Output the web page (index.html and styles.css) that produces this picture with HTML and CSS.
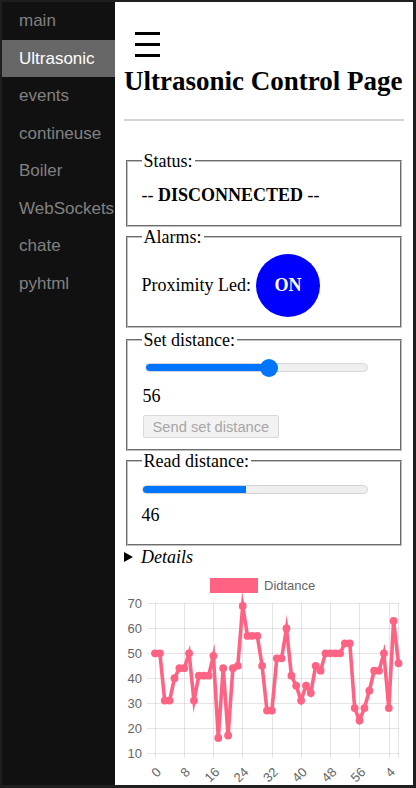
FILE: index.html
```html
<!DOCTYPE html>
<html>
<head>
<meta charset="utf-8">
<title>Ultrasonic Control Page</title>
<link rel="stylesheet" href="styles.css">
</head>
<body>
<div class="frame">
  <nav class="sidenav">
    <a class="nav-link" href="#">main</a>
    <a class="nav-link active" href="#">Ultrasonic</a>
    <a class="nav-link" href="#">events</a>
    <a class="nav-link" href="#">contineuse</a>
    <a class="nav-link" href="#">Boiler</a>
    <a class="nav-link" href="#">WebSockets</a>
    <a class="nav-link" href="#">chate</a>
    <a class="nav-link" href="#">pyhtml</a>
  </nav>
  <main class="main">
    <div class="menu-btn"><span></span><span></span><span></span></div>
    <h1 class="title">Ultrasonic Control Page</h1>
    <hr class="rule">

    <fieldset class="box box-status">
      <legend class="box-legend">Status:</legend>
      <div class="status-text">-- <strong>DISCONNECTED</strong> --</div>
    </fieldset>

    <fieldset class="box box-alarms">
      <legend class="box-legend">Alarms:</legend>
      <div class="alarm-row">
        <span>Proximity Led:</span>
        <button class="led" type="button">ON</button>
      </div>
    </fieldset>

    <fieldset class="box box-set">
      <legend class="box-legend">Set distance:</legend>
      <input class="slider" type="range" min="0" max="100" value="56" style="--fill:55.3%">
      <div class="value set-value">56</div>
      <button class="send-btn" type="button" disabled>Send set distance</button>
    </fieldset>

    <fieldset class="box box-read">
      <legend class="box-legend">Read distance:</legend>
      <progress class="meter" max="100" value="46"></progress>
      <div class="value read-value">46</div>
    </fieldset>

    <details class="details">
      <summary class="summary"><span class="tri"></span><em>Details</em></summary>
    </details>

    <svg class="chart" width="280" height="221" viewBox="0 0 280 221" xmlns="http://www.w3.org/2000/svg">
      <defs>
        <marker id="dot" markerUnits="userSpaceOnUse" markerWidth="10" markerHeight="10" refX="5" refY="5" viewBox="0 0 10 10">
          <circle cx="5" cy="5" r="3.9" fill="rgb(255,99,132)"/>
        </marker>
      </defs>
      <rect x="86" y="11" width="48" height="15" fill="rgb(255,99,132)"/>
      <text class="chart-text" x="140" y="23">Didtance</text>

      <g stroke="rgba(0,0,0,0.1)" stroke-width="1">
        <line x1="23" y1="36.5" x2="275" y2="36.5"/>
        <line x1="23" y1="61.5" x2="275" y2="61.5"/>
        <line x1="23" y1="86.5" x2="275" y2="86.5"/>
        <line x1="23" y1="111.5" x2="275" y2="111.5"/>
        <line x1="23" y1="136.5" x2="275" y2="136.5"/>
        <line x1="23" y1="161.5" x2="275" y2="161.5"/>
        <line x1="23" y1="186.5" x2="275" y2="186.5"/>
        <line x1="31.5" y1="36" x2="31.5" y2="191"/>
        <line x1="60.5" y1="36" x2="60.5" y2="191"/>
        <line x1="89.5" y1="36" x2="89.5" y2="191"/>
        <line x1="118.5" y1="36" x2="118.5" y2="191"/>
        <line x1="148.5" y1="36" x2="148.5" y2="191"/>
        <line x1="177.5" y1="36" x2="177.5" y2="191"/>
        <line x1="206.5" y1="36" x2="206.5" y2="191"/>
        <line x1="235.5" y1="36" x2="235.5" y2="191"/>
        <line x1="265.5" y1="36" x2="265.5" y2="191"/>
        <line x1="274.5" y1="36" x2="274.5" y2="191"/>
      </g>

      <g class="chart-text" text-anchor="end">
        <text x="18" y="41">70</text>
        <text x="18" y="66">60</text>
        <text x="18" y="91">50</text>
        <text x="18" y="116">40</text>
        <text x="18" y="141">30</text>
        <text x="18" y="166">20</text>
        <text x="18" y="191">10</text>
      </g>

      <g class="chart-text" text-anchor="end">
        <text x="35" y="207" transform="rotate(-45 35 203)">0</text>
        <text x="64" y="207" transform="rotate(-45 64 203)">8</text>
        <text x="93.5" y="207" transform="rotate(-45 93.5 203)">16</text>
        <text x="122.5" y="207" transform="rotate(-45 122.5 203)">24</text>
        <text x="152" y="207" transform="rotate(-45 152 203)">32</text>
        <text x="181" y="207" transform="rotate(-45 181 203)">40</text>
        <text x="210.5" y="207" transform="rotate(-45 210.5 203)">48</text>
        <text x="239.5" y="207" transform="rotate(-45 239.5 203)">56</text>
        <text x="269" y="207" transform="rotate(-45 269 203)">4</text>
      </g>

      <polyline fill="none" stroke="rgb(255,99,132)" stroke-width="3.6" stroke-linejoin="miter" stroke-miterlimit="10"
        marker-start="url(#dot)" marker-mid="url(#dot)" marker-end="url(#dot)"
        points="31.0,86.3 35.9,86.3 40.7,133.6 45.6,133.6 50.5,111.2 55.4,101.2 60.2,101.2 65.1,86.3 70.0,133.6 74.8,108.7 79.7,108.7 84.6,108.7 89.4,88.8 94.3,171.0 99.2,101.2 104.1,168.5 108.9,101.2 113.8,98.8 118.7,39.0 123.5,68.9 128.4,68.9 133.3,68.9 138.1,98.8 143.0,143.6 147.9,143.6 152.8,91.3 157.6,91.3 162.5,61.4 167.4,108.7 172.2,118.7 177.1,133.6 182.0,118.7 186.8,126.1 191.7,98.8 196.6,103.7 201.5,86.3 206.3,86.3 211.2,86.3 216.1,86.3 220.9,76.3 225.8,76.3 230.7,141.1 235.5,153.5 240.4,141.1 245.3,123.7 250.2,103.7 255.0,103.7 259.9,86.3 264.8,141.1 269.6,53.9 274.5,96.3"/>
    </svg>
  </main>
</div>
</body>
</html>
```

FILE: styles.css
```css
html, body {
  margin: 0;
  padding: 0;
}

body {
  background: #1f1f1f;
}

.frame {
  display: flex;
  height: 788px;
  box-sizing: border-box;
  padding: 2px 3px 3px 2px;
}

.sidenav {
  width: 113px;
  flex: none;
  background: #111;
  display: flex;
  flex-direction: column;
  font-family: "Liberation Sans", Arial, sans-serif;
  font-size: 17px;
}

.nav-link {
  display: block;
  height: 37.5px;
  line-height: 37.5px;
  padding-left: 17px;
  color: #818181;
  text-decoration: none;
  white-space: nowrap;
}

.nav-link.active {
  background: #676767;
  color: #fff;
}

.main {
  flex: 1;
  min-width: 0;
  background: #fff;
  overflow: hidden;
  padding: 0 9px;
  font-family: "Liberation Serif", "Times New Roman", serif;
  font-size: 18px;
  color: #000;
}

.menu-btn {
  display: flex;
  flex-direction: column;
  gap: 8px;
  width: 25px;
  margin-left: 11px;
  padding-top: 30px;
}

.menu-btn span {
  display: block;
  height: 3px;
  background: #000;
}

.title {
  margin: 8px 0 0;
  font-size: 27px;
  line-height: 33px;
  font-weight: bold;
  white-space: nowrap;
}

.rule {
  margin: 21px 0 0;
  height: 0;
  border: 0;
  border-top: 2px solid #d4d4d4;
}

.box {
  margin: 0 2px;
  padding: 0 12px 0 13.5px;
  border: 2px groove #c0c0c0;
  min-width: 0;
}

.box-legend {
  padding: 0 2px;
  font-size: 18px;
  line-height: 20px;
}

.box-status {
  margin-top: 30px;
  padding-bottom: 20px;
}

.status-text {
  margin-top: 14px;
  line-height: 20px;
}

.box-alarms {
  padding-bottom: 9px;
}

.alarm-row {
  margin-top: 7px;
  display: flex;
  align-items: center;
  gap: 5px;
}

.led {
  width: 64px;
  height: 63px;
  border: 0;
  border-radius: 50%;
  background: #0000ff;
  color: #fff;
  font-family: "Liberation Serif", "Times New Roman", serif;
  font-size: 18px;
  font-weight: bold;
  padding: 0;
}

.box-set {
  margin-top: 2px;
  padding-bottom: 11px;
}

.slider {
  -webkit-appearance: none;
  appearance: none;
  display: block;
  width: 223px;
  height: 18px;
  margin: 8.5px 0 0 3.5px;
  padding: 0;
  background: transparent;
}

.slider::-webkit-slider-runnable-track {
  height: 9px;
  box-sizing: border-box;
  border-radius: 5px;
  border: 1px solid #d6d6d6;
  background: linear-gradient(to right, #0075ff 0, #0075ff var(--fill), #efefef var(--fill), #efefef 100%);
}

.slider::-webkit-slider-thumb {
  -webkit-appearance: none;
  appearance: none;
  width: 18px;
  height: 18px;
  border: 0;
  border-radius: 50%;
  background: #0075ff;
  margin-top: -5.5px;
}

.value {
  line-height: 20px;
}

.set-value {
  margin-top: 9.5px;
  padding-left: 1px;
}

.send-btn {
  display: block;
  margin: 9px 0 0 1px;
  height: 23px;
  padding: 0 9px;
  font-family: "Liberation Sans", Arial, sans-serif;
  font-size: 14.7px;
  color: #a6a6a6;
  background: #f2f2f2;
  border: 1px solid #d9d9d9;
  border-radius: 2px;
}

.box-read {
  padding-bottom: 19px;
}

.meter {
  -webkit-appearance: none;
  appearance: none;
  display: block;
  width: 226px;
  height: 9px;
  margin-top: 13.5px;
  border: 0;
  background: transparent;
}

.meter::-webkit-progress-bar {
  background: #efefef;
  border: 1px solid #d3d3d3;
  border-radius: 5px;
  box-sizing: border-box;
}

.meter::-webkit-progress-value {
  background: #0075ff;
  border-radius: 5px 0 0 5px;
}

.read-value {
  margin-top: 11.5px;
}

.details {
  margin-top: 1px;
}

.summary {
  display: flex;
  align-items: center;
  list-style: none;
  line-height: 20px;
}

.summary::-webkit-details-marker {
  display: none;
}

.tri {
  width: 0;
  height: 0;
  border-left: 9px solid #000;
  border-top: 5px solid transparent;
  border-bottom: 5px solid transparent;
  margin-right: 8px;
}

.chart {
  display: block;
}

.chart-text {
  font-family: "Liberation Sans", Arial, sans-serif;
  font-size: 13px;
  fill: #666;
}
```
